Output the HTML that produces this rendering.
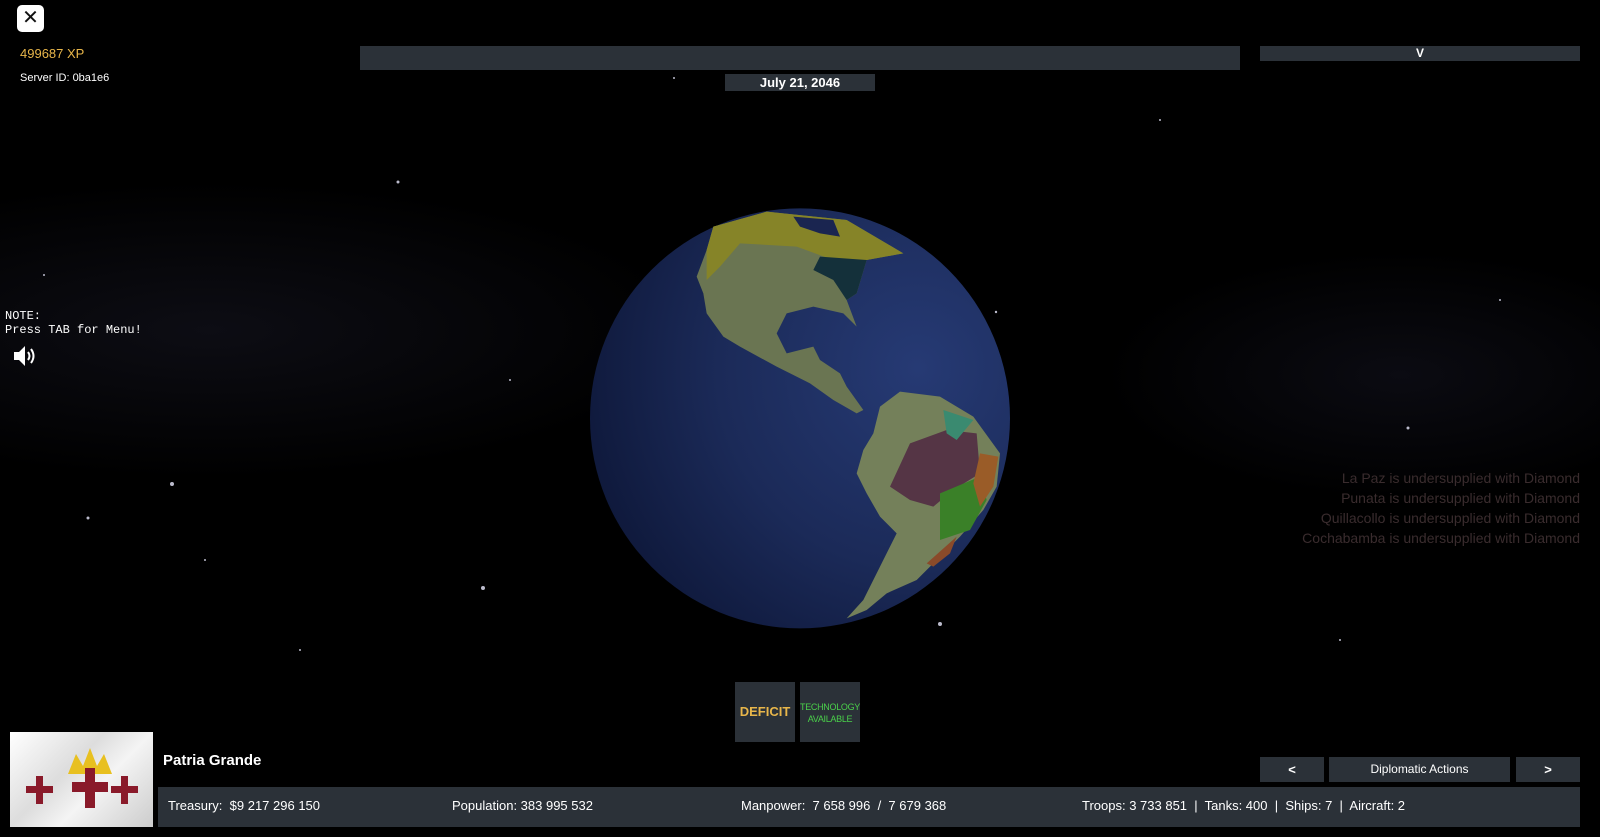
<!DOCTYPE html>
<html><head><meta charset="utf-8"><style>
body{margin:0;width:1600px;height:837px;background:#000;overflow:hidden;position:relative;font-family:"Liberation Sans",sans-serif;color:#fff}
.a{position:absolute}
.bar{background:#2b3138}
.t{font-size:13px;white-space:nowrap}
.n{right:20px;color:#3a2c2e;font-size:14px;text-align:right}
</style></head><body>
<div class="a" style="left:0;top:180px;width:700px;height:300px;background:radial-gradient(ellipse at 30% 50%,#0d0d14,#000 70%)"></div>
<div class="a" style="left:1100px;top:250px;width:500px;height:250px;background:radial-gradient(ellipse at 60% 50%,#0b0b12,#000 70%)"></div>
<svg class="a" style="left:0;top:0" width="1600" height="837">
<g fill="#bbc">
<circle cx="398" cy="182" r="1.5"/><circle cx="172" cy="484" r="2"/><circle cx="483" cy="588" r="2"/><circle cx="88" cy="518" r="1.5"/><circle cx="996" cy="312" r="1.2"/><circle cx="1408" cy="428" r="1.5"/><circle cx="44" cy="275" r="1"/><circle cx="510" cy="380" r="1"/><circle cx="674" cy="78" r="1"/><circle cx="940" cy="624" r="2"/><circle cx="1340" cy="640" r="1"/><circle cx="205" cy="560" r="1"/><circle cx="1160" cy="120" r="1"/><circle cx="1500" cy="300" r="1"/><circle cx="300" cy="650" r="1"/>
</g></svg>
<svg class="a" style="left:580px;top:200px" width="440" height="440" viewBox="0 0 1320 1320">
<defs><radialGradient id="g" cx="0.78" cy="0.38" r="0.95"><stop offset="0" stop-color="#263a74"/><stop offset="0.5" stop-color="#1b2a58"/><stop offset="1" stop-color="#0a1230"/></radialGradient></defs>
<circle cx="660" cy="655" r="630" fill="url(#g)"/>
<path fill="#6a7552" d="M400,80 L560,35 800,60 970,160 860,180 830,280 800,300 830,380 790,340 700,320 620,340 590,400 620,460 700,440 720,480 780,520 800,560 850,630 830,640 760,600 690,550 590,500 480,440 430,410 380,340 370,280 350,230 380,150Z"/>
<path fill="#868428" d="M400,80 L560,35 800,60 970,160 860,180 760,180 650,140 480,130 420,200 380,240 380,150Z"/>
<path fill="#1a2550" d="M640,50 L760,60 780,110 720,100 660,80Z"/>
<path fill="#14303a" d="M720,170 L860,180 830,280 800,300 760,240 700,210Z"/>
<path fill="#74805a" d="M900,620 L960,575 1080,590 1180,650 1260,760 1250,860 1210,930 1140,1010 1080,1070 1010,1140 920,1180 860,1230 800,1255 850,1200 900,1100 950,1000 900,950 860,880 830,820 850,750 880,700Z"/>
<path fill="#553545" d="M930,860 L990,730 1100,690 1190,700 1200,820 1120,870 1060,920 990,900Z"/>
<path fill="#3a8028" d="M1080,880 L1200,830 1220,900 1170,990 1080,1020Z"/>
<path fill="#9a5c28" d="M1200,760 L1255,770 1240,860 1200,920 1180,850Z"/>
<path fill="#8a4a2a" d="M1040,1090 L1130,1010 1110,1060 1060,1100Z"/>
<path fill="#3a8a70" d="M1090,630 L1180,660 1130,720 1100,700Z"/>
</svg>
<div class="a" style="left:17px;top:5px;width:27px;height:27px;background:#fff;border-radius:5px;color:#111;font-size:20px;text-align:center;line-height:27px">✕</div>
<div class="a t" style="left:20px;top:46px;color:#e8b64a;font-size:13px">499687 XP</div>
<div class="a t" style="left:20px;top:72px;font-size:11px">Server ID: 0ba1e6</div>
<div class="a bar" style="left:360px;top:46px;width:880px;height:24px"></div>
<div class="a bar t" style="left:1260px;top:46px;width:320px;height:15px;text-align:center;line-height:15px;font-size:12px;font-weight:bold">V</div>
<div class="a bar t" style="left:725px;top:74px;width:150px;height:17px;text-align:center;line-height:17px;font-weight:bold">July 21, 2046</div>
<div class="a" style="left:5px;top:309px;font-family:'Liberation Mono',monospace;font-size:12px;line-height:14px">NOTE:<br>Press TAB for Menu!</div>
<svg class="a" style="left:12px;top:344px" width="26" height="24" viewBox="0 0 26 24"><path d="M2,8 H7 L13,2 V22 L7,16 H2Z" fill="#fff"/><path d="M16,8 Q19,12 16,16 M19,5 Q24,12 19,19" stroke="#fff" stroke-width="2" fill="none"/></svg>
<div class="a n" style="top:470px">La Paz is undersupplied with Diamond</div>
<div class="a n" style="top:490px">Punata is undersupplied with Diamond</div>
<div class="a n" style="top:510px">Quillacollo is undersupplied with Diamond</div>
<div class="a n" style="top:530px">Cochabamba is undersupplied with Diamond</div>
<div class="a bar" style="left:735px;top:682px;width:60px;height:60px;color:#e8b64a;font-size:13px;font-weight:bold;text-align:center;line-height:60px">DEFICIT</div>
<div class="a bar" style="left:800px;top:682px;width:60px;height:60px;color:#4ad04a;font-size:9px;text-align:center;padding-top:19px;box-sizing:border-box;line-height:12px;letter-spacing:-0.3px">TECHNOLOGY<br>AVAILABLE</div>
<div class="a" style="left:10px;top:732px;width:143px;height:95px;background:linear-gradient(135deg,#fff,#ddd 40%,#f4f4f4 60%,#ccc)">
<svg width="143" height="95"><path d="M58,42 L66,22 73,34 80,16 87,34 94,22 102,42Z" fill="#e8c020"/><g fill="#8a1a2a"><rect x="26" y="44" width="7" height="28"/><rect x="16" y="54" width="27" height="7"/><rect x="111" y="44" width="7" height="28"/><rect x="101" y="54" width="27" height="7"/><rect x="75" y="36" width="10" height="40"/><rect x="62" y="50" width="36" height="10"/></g></svg></div>
<div class="a" style="left:163px;top:752px;font-size:15px;font-weight:bold">Patria Grande</div>
<div class="a bar t" style="left:1260px;top:757px;width:64px;height:25px;text-align:center;line-height:25px;font-weight:bold">&lt;</div>
<div class="a bar t" style="left:1329px;top:757px;width:181px;height:25px;text-align:center;line-height:25px;font-size:12px">Diplomatic Actions</div>
<div class="a bar t" style="left:1516px;top:757px;width:64px;height:25px;text-align:center;line-height:25px;font-weight:bold">&gt;</div>
<div class="a bar" style="left:158px;top:787px;width:1422px;height:40px"></div>
<div class="a t" style="left:168px;top:798px">Treasury:&nbsp; $9 217 296 150</div>
<div class="a t" style="left:452px;top:798px">Population: 383 995 532</div>
<div class="a t" style="left:741px;top:798px">Manpower:&nbsp; 7 658 996&nbsp; /&nbsp; 7 679 368</div>
<div class="a t" style="left:1082px;top:798px">Troops: 3 733 851&nbsp; |&nbsp; Tanks: 400&nbsp; |&nbsp; Ships: 7&nbsp; |&nbsp; Aircraft: 2</div>
</body></html>
